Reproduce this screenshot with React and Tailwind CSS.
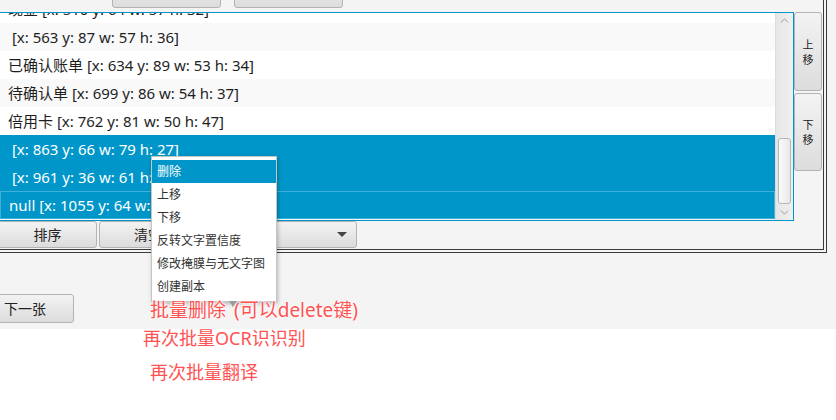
import { ChevronUp, ChevronDown } from "lucide-react";

const font = { fontFamily: '"Noto Sans", "Noto Sans CJK SC", sans-serif' };

const rows = [
  { text: "现金 [x: 510 y: 64 w: 57 h: 32]", bg: "bg-white" },
  { text: " [x: 563 y: 87 w: 57 h: 36]", bg: "bg-[#f9f9f9]" },
  { text: "已确认账单 [x: 634 y: 89 w: 53 h: 34]", bg: "bg-white" },
  { text: "待确认单 [x: 699 y: 86 w: 54 h: 37]", bg: "bg-[#f9f9f9]" },
  { text: "倍用卡 [x: 762 y: 81 w: 50 h: 47]", bg: "bg-white" },
  { text: " [x: 863 y: 66 w: 79 h: 27]", sel: true },
  { text: " [x: 961 y: 36 w: 61 h: 36]", sel: true },
  { text: "null [x: 1055 y: 64 w: 58 h: 30]", sel: true, focus: true },
];

const menuItems = ["删除", "上移", "下移", "反转文字置信度", "修改掩膜与无文字图", "创建副本"];

const btn =
  "bg-gradient-to-b from-[#f3f3f3] to-[#dcdcdc] border border-[#b3b3b3] rounded-[3px] text-[#222]";

const note =
  "absolute text-[18px] leading-[26px] text-[#ff5252] whitespace-pre [text-shadow:0_0_2px_#fff,0_0_2px_#fff,0_0_3px_#fff]";

const SideButton = ({ a, b, h }) => (
  <div className={`${btn} w-[28px] flex flex-col items-center justify-center text-[11px] leading-[15px] ${h}`}>
    <span>{a}</span>
    <span>{b}</span>
  </div>
);

const App = () => {
  return (
    <div className="w-[836px] h-[420px] bg-white overflow-hidden relative text-[#1e1e1e]" style={font}>
      <div className="bg-[#f4f4f4] h-[329px] flex flex-col">
        {/* panel */}
        <div className="w-[827px] h-[253px] flex flex-col border-r-4 border-b-4 border-double border-[#3a3a3a]">
          {/* cut-off buttons */}
          <div className="h-[12px] overflow-hidden flex">
            <div className={`${btn} ml-[112px] w-[109px] h-[30px] mt-[-22px] text-[14px] text-center leading-[28px]`}>
              导出结果
            </div>
            <div className={`${btn} ml-[13px] w-[109px] h-[30px] mt-[-22px] text-[14px] text-center leading-[28px]`}>
              导入标注
            </div>
          </div>
          <div className="flex">
            {/* list */}
            <div className="w-[795px] h-[209px] ml-[-1px] border border-[#0096c9] flex overflow-hidden">
              <div className="flex-1 overflow-hidden">
                <div className="mt-[-18px] flex flex-col">
                  {rows.map((r, i) => (
                    <div
                      key={i}
                      className={`h-[28px] shrink-0 flex items-center text-[15px] whitespace-pre pl-[8px] ${
                        r.sel ? "bg-[#0096c9] text-white" : r.bg
                      } ${r.focus ? "border border-[#3fb0da] pl-[7px]" : ""}`}
                    >
                      {r.text}
                    </div>
                  ))}
                </div>
              </div>
              {/* scrollbar */}
              <div className="w-[18px] bg-gradient-to-r from-[#e6e6e6] to-[#f0f0f0] border-l border-[#dcdcdc] flex flex-col items-center">
                <ChevronUp size={13} strokeWidth={1.5} className="text-[#888] mt-[1px]" />
                <div className="flex-1 w-full" />
                <div className="w-[13px] h-[66px] rounded-[3px] border border-[#b4b4b4] bg-gradient-to-r from-[#fafafa] to-[#e8e8e8]" />
                <ChevronDown size={13} strokeWidth={1.5} className="text-[#888] mt-[2px] mb-[1px]" />
              </div>
            </div>
            {/* side buttons */}
            <div className="flex flex-col gap-[2px]">
              <SideButton a="上" b="移" h="h-[79px]" />
              <SideButton a="下" b="移" h="h-[78px]" />
            </div>
          </div>
          {/* toolbar */}
          <div className="flex gap-[2px]">
            <div className={`${btn} ml-[-2px] w-[99px] h-[27px] flex items-center justify-center text-[14px]`}>
              排序
            </div>
            <div className={`${btn} w-[258px] h-[27px] flex items-center text-[14px] pl-[34px] pr-[9px]`}>
              <span className="flex-1">清空选中</span>
              <span className="w-0 h-0 border-l-[5px] border-r-[5px] border-t-[5px] border-l-transparent border-r-transparent border-t-[#444]" />
            </div>
          </div>
        </div>
        {/* next button */}
        <div className="mt-[41px] flex">
          <div className={`${btn} ml-[-4px] w-[78px] h-[29px] flex items-center pl-[7px] text-[14px]`}>
            下一张
          </div>
        </div>
      </div>

      {/* context menu */}
      <div className="absolute left-[151px] top-[156px] w-[126px] bg-white border border-[#c4c4c4] shadow-[1px_2px_4px_rgba(0,0,0,0.25)] py-[3px]">
        {menuItems.map((m, i) => (
          <div
            key={m}
            className={`h-[23px] flex items-center px-[5px] text-[12px] ${
              i === 0 ? "bg-[#0096c9] text-white" : "text-[#333]"
            }`}
          >
            {m}
          </div>
        ))}
      </div>
      <div className="absolute left-[229px] top-[301px] w-0 h-0 border-l-[4px] border-r-[4px] border-t-[6px] border-l-transparent border-r-transparent border-t-[#9a9a9a]" />

      {/* annotations */}
      <div className={`${note} left-[150px] top-[297px] flex text-[19px]`}>
        <span>批量删除</span>
        <span className="ml-[8px]">(可以delete键)</span>
      </div>
      <div className={`${note} left-[143px] top-[325px]`}>再次批量OCR识识别</div>
      <div className={`${note} left-[150px] top-[359px]`}>再次批量翻译</div>
    </div>
  );
};

export default App;
